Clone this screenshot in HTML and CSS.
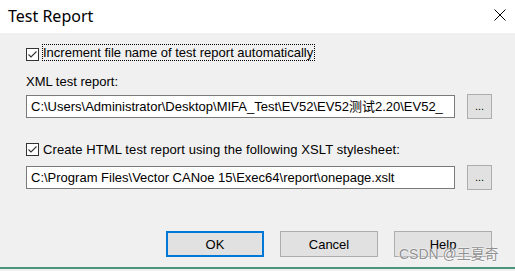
FILE: index.html
```html
<!DOCTYPE html>
<html lang="en">
<head>
  <meta charset="UTF-8" />
  <title>Test Report</title>
  <link rel="stylesheet" href="styles.css">
</head>
<body>
  <div class="dialog">
    <div class="titlebar">
      <span class="title">Test Report</span>
      <svg class="close" width="12" height="12" viewBox="0 0 12 12" aria-label="Close">
        <path d="M0.5 0.5 L11.5 11.5 M11.5 0.5 L0.5 11.5" stroke="#000" stroke-width="1" fill="none"/>
      </svg>
    </div>

    <div class="content">
      <label class="check first">
        <span class="box">
          <svg width="11" height="11" viewBox="0 0 11 11">
            <path d="M1.5 5.5 L4 8 L9.5 2.5" stroke="#333" stroke-width="1.1" fill="none"/>
          </svg>
        </span>
        <span class="focus">Increment file name of test report automatically</span>
      </label>

      <div class="field-label">XML test report:</div>
      <div class="path-row">
        <div class="path">C:\Users\Administrator\Desktop\MIFA_Test\EV52\EV52测试2.20\EV52_</div>
        <button class="browse">...</button>
      </div>

      <label class="check second">
        <span class="box">
          <svg width="11" height="11" viewBox="0 0 11 11">
            <path d="M1.5 5.5 L4 8 L9.5 2.5" stroke="#333" stroke-width="1.1" fill="none"/>
          </svg>
        </span>
        <span class="text">Create HTML test report using the following XSLT stylesheet:</span>
      </label>
      <div class="path-row tight">
        <div class="path">C:\Program Files\Vector CANoe 15\Exec64\report\onepage.xslt</div>
        <button class="browse">...</button>
      </div>

      <div class="actions">
        <button class="btn default">OK</button>
        <button class="btn">Cancel</button>
        <button class="btn">Help</button>
      </div>

      <span class="watermark">CSDN @王夏奇</span>
    </div>
    <div class="edge"></div>
  </div>
</body>
</html>
```

FILE: styles.css
```css
body {
  margin: 0;
  background-color: #f0f0f0;
  font-family: 'Liberation Sans', Arial, 'Noto Sans CJK SC', sans-serif;
  color: #000;
}
.dialog {
  width: 515px;
  height: 271px;
  display: flex;
  flex-direction: column;
}
.titlebar {
  height: 33px;
  background-color: #ffffff;
  display: flex;
  align-items: center;
  justify-content: space-between;
  padding: 0 9px 0 8px;
  box-sizing: border-box;
}
.title {
  font-family: 'Noto Sans', 'Open Sans', sans-serif;
  font-size: 16px;
  margin-top: -2px;
}
.close {
  margin-top: -4px;
}
.content {
  position: relative;
  height: 234px;
  padding: 11px 23px 0 26px;
  box-sizing: border-box;
  display: flex;
  flex-direction: column;
  font-size: 13px;
}
.check {
  display: flex;
  align-items: flex-start;
}
.box {
  width: 13px;
  height: 13px;
  box-sizing: border-box;
  border: 1px solid #333;
  background-color: #fff;
  display: flex;
  margin-top: 4px;
}
.focus {
  margin-left: 3px;
  height: 17px;
  line-height: 16px;
  padding: 0 1px 0 0;
  border: 1px dotted #000;
  box-sizing: border-box;
}
.second {
  margin-top: 24px;
}
.second .box {
  margin-top: 0;
}
.second .text {
  margin-left: 4px;
  line-height: 14px;
  letter-spacing: 0.1px;
}
.field-label {
  margin-top: 14px;
  line-height: 14px;
}
.path-row {
  display: flex;
  align-items: center;
  gap: 12px;
  margin-top: 5px;
}
.path-row.tight {
  margin-top: 8px;
}
.path {
  width: 429px;
  height: 23px;
  box-sizing: border-box;
  border: 1px solid #7a7a7a;
  background-color: #fff;
  padding: 0 0 0 4px;
  line-height: 21px;
  white-space: nowrap;
  overflow: hidden;
  font-size: 13px;
}
.browse {
  width: 25px;
  height: 25px;
  border: 1px solid #adadad;
  background-color: #e1e1e1;
  font-family: inherit;
  font-size: 11px;
  padding: 0;
  line-height: 23px;
}
.actions {
  margin-top: 41px;
  display: flex;
  justify-content: flex-end;
  gap: 16px;
}
.btn {
  width: 98px;
  height: 26px;
  box-sizing: border-box;
  border: 1px solid #adadad;
  background-color: #e1e1e1;
  font-family: 'Liberation Sans', Arial, sans-serif;
  font-size: 13px;
  padding: 0;
}
.btn.default {
  border: 2px solid #0078d7;
}
.watermark {
  position: absolute;
  left: 399px;
  top: 212px;
  font-family: 'Liberation Sans', 'Noto Sans CJK SC', sans-serif;
  font-size: 14px;
  line-height: 18px;
  color: rgba(130, 130, 130, 0.9);
  text-shadow: 0 0 2px #fff, 0 0 1px #fff;
}
.edge {
  height: 2px;
  background-color: #4a957c;
}
```
